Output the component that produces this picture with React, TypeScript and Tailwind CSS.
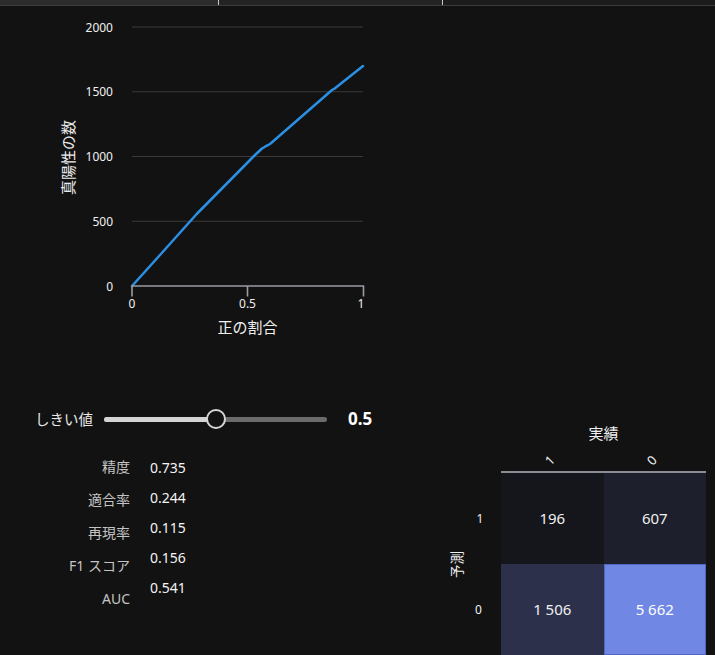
import React from "react";

const FONT = "'Noto Sans','Noto Sans CJK JP',sans-serif";

function Chart() {
  const ox = 80;
  const oy = 24;
  const yv = (v: number) => 286 - (v / 2000) * 259 - oy;
  const pts: [number, number][] = [
    [132, 286],
    [160, 255],
    [196.7, 214],
    [255, 155],
    [262, 148.5],
    [265, 146.7],
    [270, 144],
    [328.3, 93.3],
    [332, 90],
    [335, 88.3],
    [363, 66],
  ];
  const d = pts.map((p, i) => `${i ? "L" : "M"}${p[0] - ox},${p[1] - oy}`).join(" ");
  const grid = [500, 1000, 1500, 2000];
  const yt = [0, 500, 1000, 1500, 2000];
  return (
    <svg width={290} height={292} className="block" style={{ fontFamily: FONT }}>
      {grid.map((g) => (
        <line key={g} x1={52} x2={283} y1={yv(g) + 1} y2={yv(g) + 1} stroke="#3a3a3a" strokeWidth={1} />
      ))}
      {yt.map((t) => (
        <text key={t} x={33} y={yv(t) + 1} textAnchor="end" dominantBaseline="central" fontSize={12} fill="#f0f0f0">
          {t}
        </text>
      ))}
      <g transform="translate(0,1)">
        <path d={d} fill="none" stroke="#2b8fe3" strokeWidth={2.5} strokeLinejoin="round" strokeLinecap="round" />
        <path d="M52,272.5 V262 H283.5 V272.5 M167.5,262 V272.5" fill="none" stroke="#9a9ca3" strokeWidth={1.6} />
        <text x={52} y={279} textAnchor="middle" dominantBaseline="central" fontSize={12} fill="#f0f0f0">0</text>
        <text x={167.5} y={279} textAnchor="middle" dominantBaseline="central" fontSize={12} fill="#f0f0f0">0.5</text>
        <text x={281} y={279} textAnchor="middle" dominantBaseline="central" fontSize={12} fill="#f0f0f0">1</text>
      </g>
    </svg>
  );
}

export default function App() {
  const labels = ["精度", "適合率", "再現率", "F1 スコア", "AUC"];
  const values = ["0.735", "0.244", "0.115", "0.156", "0.541"];
  return (
    <div
      className="w-[715px] h-[655px] overflow-hidden bg-[#121212] text-[#f0f0f0] font-['Noto_Sans','Noto_Sans_CJK_JP',sans-serif]"
    >
      {/* top tab strip */}
      <div className="flex h-[5px]">
        <div className="w-[218px] bg-[#2c2c2c]" />
        <div className="w-[1px] bg-[#c8c8c8]" />
        <div className="w-[223px] bg-[#242424]" />
        <div className="w-[1px] bg-[#c8c8c8]" />
        <div className="flex-1 bg-[#1c1c1c]" />
      </div>
      <div className="h-[1px] bg-[#3c3c3c]" />

      {/* chart */}
      <div className="flex mt-[17px]">
        <div className="w-[80px] h-[292px] flex items-center justify-end pr-[4px] pb-[22px]">
          <div className="[writing-mode:vertical-rl] [text-orientation:sideways] rotate-180 text-[15px] leading-[16px] text-[#ececec]">
            真陽性の数
          </div>
        </div>
        <div className="flex flex-col">
          <Chart />
          <div className="ml-[52px] w-[231px] mt-[2px] text-center text-[15px] leading-[20px] text-[#f0f0f0]">
            正の割合
          </div>
        </div>
      </div>

      {/* bottom */}
      <div className="flex mt-[68px]">
        <div className="w-[445px] shrink-0">
          <div className="flex items-center h-[28px] pl-[35px]">
            <div className="w-[69px] text-[14.5px] leading-[20px] text-[#e8e8e8]">しきい値</div>
            <div className="relative w-[223px] h-[5px] rounded-full bg-[#6b6b6b]">
              <div className="h-full w-[112px] rounded-full bg-[#d4d4d4]" />
              <div className="absolute left-[102px] top-[-7.5px] w-[20px] h-[20px] rounded-full border-2 border-[#d4d4d4] bg-[#121212]" />
            </div>
            <div className="ml-[21px] text-[17px] font-bold leading-[20px] text-white">0.5</div>
          </div>
          <div className="flex mt-[17px]">
            <div className="w-[130px] text-right">
              {labels.map((l) => (
                <div key={l} className="h-[33px] leading-[33px] text-[14px] text-[#c4c4c4]">
                  {l}
                </div>
              ))}
            </div>
            <div className="ml-[20px] pt-[3px]">
              {values.map((v) => (
                <div key={v} className="h-[30px] leading-[30px] text-[14px] text-[#f4f4f4]">
                  {v}
                </div>
              ))}
            </div>
          </div>
        </div>

        <div className="flex flex-col pt-[18px]">
          <div className="ml-[56px] w-[205px] text-center text-[15px] leading-[20px]">実績</div>
          <div className="flex ml-[53px] mt-[7px] h-[20px]">
            <div className="w-[102.5px] flex items-center justify-center">
              <span className="inline-block rotate-[-45deg] text-[13px] leading-[14px]">1</span>
            </div>
            <div className="w-[102.5px] flex items-center justify-center">
              <span className="inline-block rotate-[-45deg] text-[13px] leading-[14px]">0</span>
            </div>
          </div>
          <div className="flex mt-[1px]">
            <div className="w-[24px] flex items-center justify-center pt-[2px]">
              <div className="[writing-mode:vertical-rl] [text-orientation:sideways] rotate-180 text-[13.5px] leading-[14px]">
                予測
              </div>
            </div>
            <div className="w-[22px] pt-[2px] flex flex-col">
              <div className="h-[91px] flex items-center justify-center text-[12px]">1</div>
              <div className="h-[91px] flex items-center justify-center text-[12px] pr-[3px]">0</div>
            </div>
            <div className="ml-[10px] w-[205px] border-t-2 border-[#8a8c94]">
              <div className="grid grid-cols-2">
                <div className="h-[91px] flex items-center justify-center bg-[#15161b] text-[15px]">196</div>
                <div className="h-[91px] flex items-center justify-center bg-[#1d1f2c] text-[15px]">607</div>
                <div className="h-[91px] flex items-center justify-center bg-[#2c304b] text-[15px]">1 506</div>
                <div className="h-[91px] flex items-center justify-center bg-[#7087e3] border border-[#5066c0] text-[15px] text-white">
                  5 662
                </div>
              </div>
            </div>
          </div>
        </div>
      </div>
    </div>
  );
}
